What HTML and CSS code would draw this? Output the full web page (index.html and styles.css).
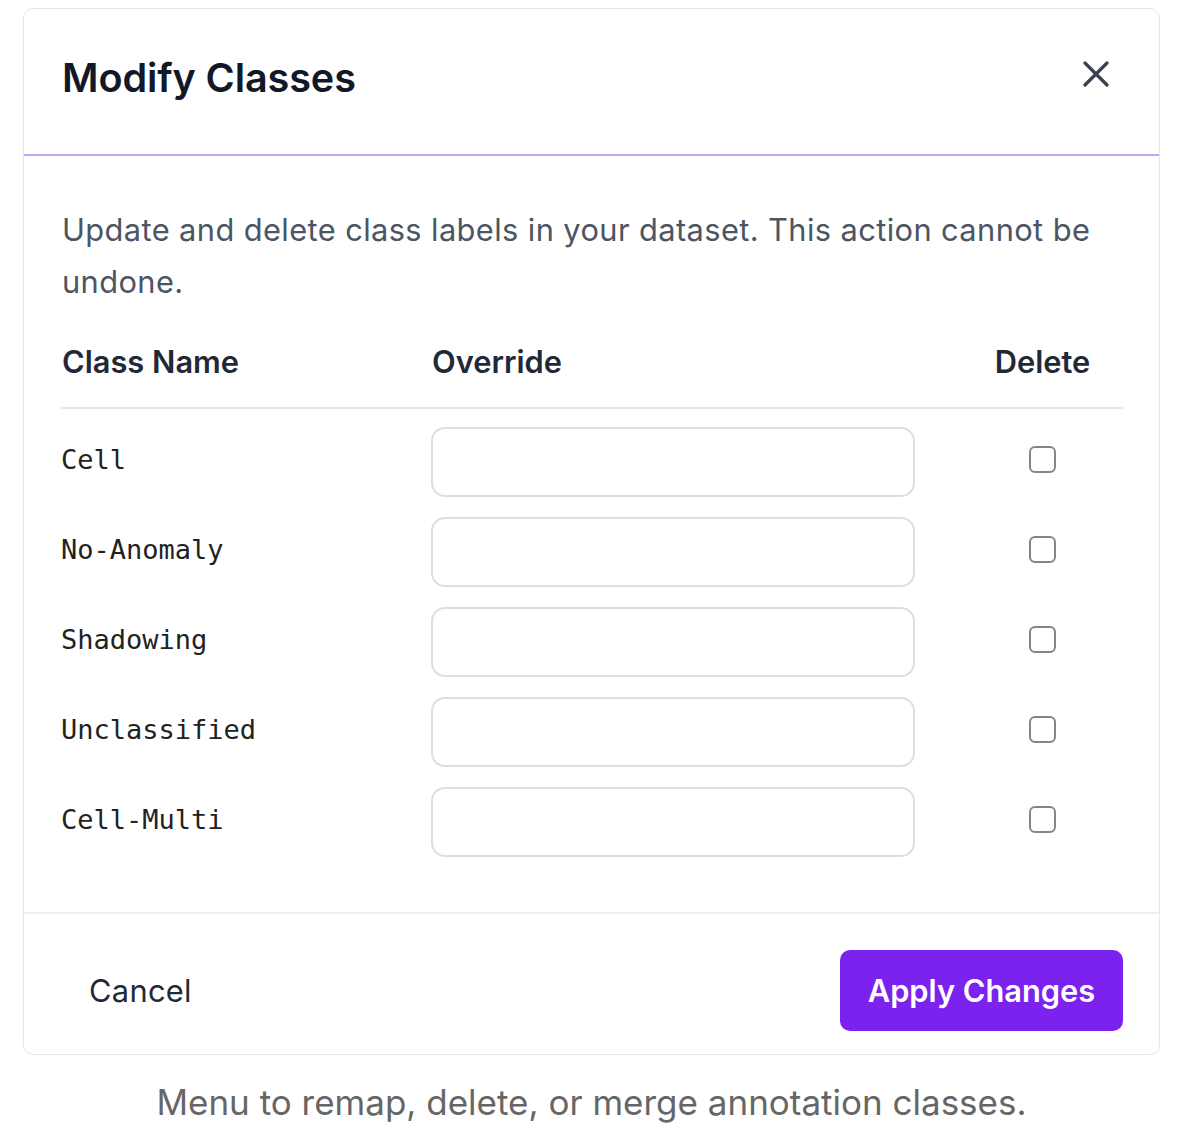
FILE: index.html
```html
<!DOCTYPE html>
<html lang="en">
<head>
<meta charset="utf-8">
<title>Modify Classes</title>
<link rel="stylesheet" href="styles.css">
</head>
<body>
<div class="page">
  <div class="modal">
    <div class="modal-header">
      <h2 class="title">Modify Classes</h2>
      <button class="close" aria-label="Close">
        <svg width="26" height="26" viewBox="0 0 26 26" fill="none" stroke="#374151" stroke-width="3.2" stroke-linecap="round"><path d="M2 2 L24 24 M24 2 L2 24"/></svg>
      </button>
    </div>
    <div class="modal-body">
      <p class="desc">Update and delete class labels in your dataset. This action cannot be undone.</p>
      <div class="table">
        <div class="thead">
          <div class="th">Class Name</div>
          <div class="th">Override</div>
          <div class="th th-center">Delete</div>
        </div>
        <div class="tbody">
          <div class="tr">
            <div class="name">Cell</div>
            <input class="field" type="text">
            <div class="cb-cell"><span class="cb"></span></div>
          </div>
          <div class="tr">
            <div class="name">No-Anomaly</div>
            <input class="field" type="text">
            <div class="cb-cell"><span class="cb"></span></div>
          </div>
          <div class="tr">
            <div class="name">Shadowing</div>
            <input class="field" type="text">
            <div class="cb-cell"><span class="cb"></span></div>
          </div>
          <div class="tr">
            <div class="name">Unclassified</div>
            <input class="field" type="text">
            <div class="cb-cell"><span class="cb"></span></div>
          </div>
          <div class="tr">
            <div class="name">Cell-Multi</div>
            <input class="field" type="text">
            <div class="cb-cell"><span class="cb"></span></div>
          </div>
        </div>
      </div>
    </div>
    <div class="modal-footer">
      <button class="btn-cancel">Cancel</button>
      <button class="btn-apply">Apply Changes</button>
    </div>
  </div>
  <p class="caption">Menu to remap, delete, or merge annotation classes.</p>
</div>
</body>
</html>
```

FILE: styles.css
```css
* { box-sizing: border-box; }
html, body { margin: 0; padding: 0; background: #ffffff; }
body { font-family: Inter, "Noto Sans", "Liberation Sans", sans-serif; color: #1f2937; }

.page { padding: 8px 30px 0 23px; width: 1190px; }

.modal {
  width: 1137px;
  height: 1047px;
  border: 1.5px solid #e6e7ea;
  border-radius: 10px;
  display: flex;
  flex-direction: column;
  background: #fff;
}

.modal-header {
  height: 147px;
  border-bottom: 2px solid #c6a4f7;
  display: flex;
  align-items: center;
  justify-content: space-between;
  padding: 0 50px 8px 38px;
}
.title {
  margin: 0;
  font-size: 39.6px;
  font-weight: 600;
  color: #111827;
  letter-spacing: -0.1px;
}
.close {
  border: 0;
  background: none;
  padding: 0;
  width: 26px;
  height: 26px;
  display: flex;
  margin-top: -8px;
}

.modal-body {
  flex: 1;
  padding: 48px 36px 0 37px;
}
.desc {
  margin: 0 0 0 1px;
  font-size: 30.8px;
  line-height: 52px;
  letter-spacing: 0.4px;
  color: #4b5563;
}

.table { margin-top: 32px; }
.thead, .tr {
  display: grid;
  grid-template-columns: 370px 484px 1fr;
}
.thead {
  border-bottom: 2px solid #e5e7eb;
  padding: 0 0 23px 1px;
}
.th {
  font-size: 30.8px;
  line-height: 44px;
  font-weight: 600;
  color: #1f2937;
}
.th-center { text-align: center; padding-left: 46px; }

.tbody {
  padding-top: 18px;
  display: flex;
  flex-direction: column;
  gap: 20px;
}
.tr { align-items: center; }
.name {
  font-family: "DejaVu Sans Mono", "Liberation Mono", monospace;
  font-size: 27px;
  color: #222;
  margin-top: -5px;
}
.field {
  display: block;
  width: 484px;
  height: 70px;
  border: 2px solid #dcdee2;
  border-radius: 14px;
  background: #fff;
  outline: none;
}
.cb-cell { display: flex; justify-content: center; padding-left: 46px; }
.cb {
  width: 27px;
  height: 27px;
  border: 2px solid #858585;
  border-radius: 6px;
  background: #fff;
  margin-top: -5px;
}

.modal-footer {
  height: 142px;
  border-top: 2px solid #eceef1;
  display: flex;
  align-items: center;
  justify-content: space-between;
  padding: 12px 36px 0 38px;
}
.btn-cancel {
  border: 0;
  background: none;
  font-family: Inter, "Noto Sans", "Liberation Sans", sans-serif;
  font-size: 30.8px;
  letter-spacing: 0.3px;
  color: #1f2937;
  padding: 0 27px;
}
.btn-apply {
  border: 0;
  background: #7c22ee;
  color: #fff;
  font-family: Inter, "Noto Sans", "Liberation Sans", sans-serif;
  font-size: 30.8px;
  font-weight: 600;
  height: 81px;
  width: 283px;
  border-radius: 10px;
  padding: 0;
}

.caption {
  margin: 26px 0 0 0;
  width: 1137px;
  text-align: center;
  font-family: Inter, "Noto Sans", sans-serif;
  font-size: 35px;
  color: #666666;
}
```
